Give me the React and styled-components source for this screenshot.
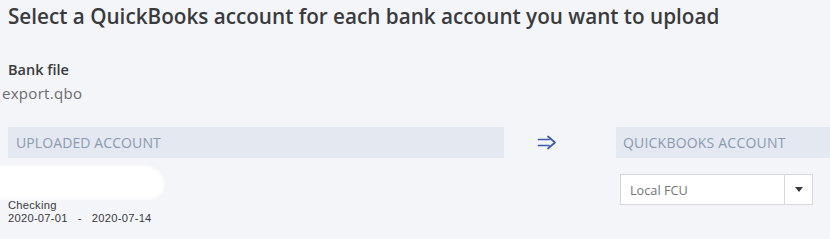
import React from "react";
import styled, { createGlobalStyle } from "styled-components";

const Global = createGlobalStyle`
  html, body { margin: 0; padding: 0; background: #f4f5f8; }
  body { font-family: "Open Sans", "Noto Sans", sans-serif; color: #393a3d; }
  * { box-sizing: border-box; }
`;

const Page = styled.div`
  width: 830px;
  height: 239px;
  overflow: hidden;
  padding: 2px 0 0 8px;
`;

const Title = styled.h1`
  margin: 0;
  font-size: 20.7px;
  line-height: 28px;
  font-weight: 600;
  color: #393a3d;
  white-space: nowrap;
`;

const FileLabel = styled.div`
  margin-top: 30px;
  font-size: 14.5px;
  line-height: 20px;
  font-weight: 600;
  color: #393a3d;
`;

const FileName = styled.div`
  margin: 2px 0 0 -6px;
  font-size: 15px;
  line-height: 22px;
  letter-spacing: 0.3px;
  color: #6b6c72;
`;

const Mapping = styled.div`
  margin-top: 23px;
  display: grid;
  grid-template-columns: 496px 112px 1fr;
  grid-template-rows: 31px auto;
`;

const HeaderBar = styled.div`
  height: 31px;
  background: #e3e8f1;
  display: flex;
  align-items: center;
  padding-left: ${(p) => p.$pad}px;
  font-size: 14px;
  letter-spacing: ${(p) => p.$ls}px;
  color: #8b9ab0;
  white-space: nowrap;
`;

const ArrowCell = styled.div`
  display: flex;
  align-items: center;
  padding-left: 33px;
  color: #3d5aa8;
`;

const AccountInfo = styled.div`
  position: relative;
  padding-top: 41px;
  font-family: "Liberation Sans", Arial, sans-serif;
  font-size: 11.2px;
  line-height: 13px;
  letter-spacing: 0.25px;
  color: #393a3d;
`;

const Redaction = styled.div`
  position: absolute;
  left: -10px;
  top: 8px;
  width: 166px;
  height: 33px;
  background: #ffffff;
  border-radius: 6px 40px 30px 4px;
  filter: blur(1.5px);
`;

const Line = styled.div`
  white-space: pre;
`;

const SelectCell = styled.div`
  padding: 16px 0 0 4px;
`;

const Select = styled.div`
  width: 193px;
  height: 31px;
  background: #fff;
  border: 1px solid #d4d7dc;
  display: flex;
  align-items: stretch;
`;

const SelectValue = styled.div`
  flex: 1;
  display: flex;
  align-items: center;
  padding-left: 9px;
  font-size: 12.7px;
  color: #737479;
`;

const Caret = styled.div`
  width: 28px;
  border-left: 1px solid #d4d7dc;
  display: flex;
  align-items: center;
  justify-content: center;
`;

const Spacer = styled.div``;

export default function App() {
  return (
    <>
      <Global />
      <Page>
        <Title>Select a QuickBooks account for each bank account you want to upload</Title>
        <FileLabel>Bank file</FileLabel>
        <FileName>export.qbo</FileName>
        <Mapping>
          <HeaderBar $pad={8} $ls={0.1}>UPLOADED ACCOUNT</HeaderBar>
          <ArrowCell>
            <svg width="20" height="15" viewBox="0 0 20 15" fill="none" stroke="currentColor" strokeWidth="1.7" strokeLinecap="round" strokeLinejoin="round">
              <path d="M1.5 4.5 H12" />
              <path d="M1.5 10.5 H12" />
              <path d="M11 1.5 L18 7.5 L11 13.5" />
            </svg>
          </ArrowCell>
          <HeaderBar $pad={7} $ls={0.2}>QUICKBOOKS ACCOUNT</HeaderBar>
          <AccountInfo>
            <Redaction />
            <Line>Checking</Line>
            <Line>{"2020-07-01   -   2020-07-14"}</Line>
          </AccountInfo>
          <Spacer />
          <SelectCell>
            <Select>
              <SelectValue>Local FCU</SelectValue>
              <Caret>
                <svg width="8" height="5" viewBox="0 0 8 5">
                  <path d="M0 0 H8 L4 5 Z" fill="#393a3d" />
                </svg>
              </Caret>
            </Select>
          </SelectCell>
        </Mapping>
      </Page>
    </>
  );
}
